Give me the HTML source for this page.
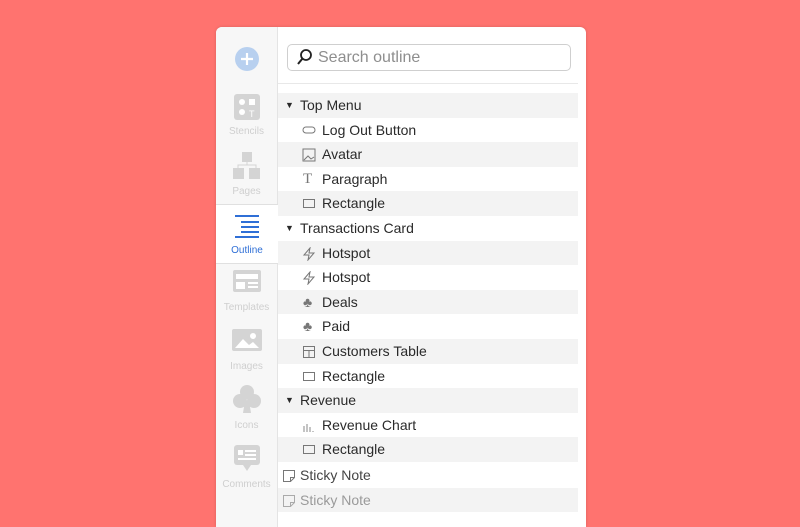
<!DOCTYPE html>
<html><head><style>
body{margin:0;width:800px;height:513px;background:#ff736f;overflow:hidden;font-family:"Liberation Sans",sans-serif;position:relative}
.panel{position:absolute;left:216px;top:27px;width:370px;height:500px;background:#fff;border-radius:6px 6px 0 0;overflow:hidden;box-shadow:0 0 3px rgba(0,0,0,.15)}
.side{position:absolute;left:0;top:0;width:61px;height:100%;background:#f7f7f7;border-right:1px solid #e4e4e4}
.si{position:absolute;left:0;width:61px;text-align:center;font-size:10px;color:#cfcfcf}
.si div{margin-top:3px}
.sel{background:#fff;border-top:1px solid #e0e0e0;border-bottom:1px solid #e0e0e0;width:62px;color:#2f6fd6}
.search{position:absolute;left:71px;top:17px;width:282px;height:25px;border:1px solid #cfcfcf;border-radius:5px;font-size:16px;color:#8e8e8e;line-height:25px;text-indent:30px}
.sep{position:absolute;left:62px;top:56px;width:300px;height:1px;background:#e8e8e8}
.row{position:absolute;left:62px;width:300px;height:24.6px;font-size:14px;color:#2a2a2a;line-height:24.6px}
.g{background:#f3f3f3}
.row svg{position:absolute;top:6px}
</style></head><body>
<div class="panel">
<div class="side">
 <div class="si" style="top:20px"><svg width="24" height="24"><circle cx="12" cy="12" r="12" fill="#b8d0ef"/><path d="M12 6v12M6 12h12" stroke="#fff" stroke-width="2.2"/></svg></div>
 <div class="si" style="top:67px"><svg width="26" height="26"><rect width="26" height="26" rx="3" fill="#d4d4d4"/><circle cx="8" cy="8" r="3" fill="#fff"/><rect x="15" y="5" width="6" height="6" fill="#fff"/><circle cx="8" cy="18" r="3" fill="#fff"/><text x="15" y="23" font-size="9" fill="#fff">T</text></svg><div>Stencils</div></div>
 <div class="si" style="top:125px"><svg width="28" height="28"><rect x="9" y="0" width="10" height="10" fill="#d4d4d4"/><rect x="0" y="16" width="11" height="11" fill="#d4d4d4"/><rect x="16" y="16" width="11" height="11" fill="#d4d4d4"/><path d="M14 10v3M5 16v-3h18v3" stroke="#d4d4d4" fill="none"/></svg><div>Pages</div></div>
 <div class="si sel" style="top:177px;height:58px"><svg width="26" height="26" style="margin-top:8px"><path d="M1 3h24M7 9h18M7 14h18M7 19h18M1 24h24" stroke="#2f6fd6" stroke-width="2"/></svg><div>Outline</div></div>
 <div class="si" style="top:243px"><svg width="28" height="24"><rect width="28" height="22" rx="2" fill="#d4d4d4"/><rect x="3" y="4" width="22" height="5" fill="#fff"/><rect x="3" y="12" width="9" height="7" fill="#fff"/><rect x="15" y="12" width="10" height="2" fill="#fff"/><rect x="15" y="16" width="10" height="2" fill="#fff"/></svg><div style="margin-top:5px">Templates</div></div>
 <div class="si" style="top:302px"><svg width="30" height="24"><rect width="30" height="22" rx="2" fill="#d4d4d4"/><path d="M3 19l8-9 6 6 4-3 6 6z" fill="#fff"/><circle cx="21" cy="7" r="3" fill="#fff"/></svg><div style="margin-top:5px">Images</div></div>
 <div class="si" style="top:357px"><svg width="30" height="30"><circle cx="15" cy="8" r="7" fill="#d4d4d4"/><circle cx="8" cy="17" r="7" fill="#d4d4d4"/><circle cx="22" cy="17" r="7" fill="#d4d4d4"/><path d="M13 17h4l2 12h-8z" fill="#d4d4d4"/></svg><div>Icons</div></div>
 <div class="si" style="top:418px"><svg width="26" height="28"><rect width="26" height="20" rx="3" fill="#d4d4d4"/><path d="M9 20l4 6 4-6z" fill="#d4d4d4"/><rect x="4" y="5" width="5" height="5" fill="#fff"/><rect x="11" y="5" width="11" height="2" fill="#fff"/><rect x="11" y="9" width="11" height="2" fill="#fff"/><rect x="4" y="13" width="18" height="2" fill="#fff"/></svg><div>Comments</div></div>
</div>
<div class="search"><svg width="16" height="18" style="position:absolute;left:8px;top:4px"><circle cx="10" cy="6" r="5" stroke="#222" stroke-width="1.8" fill="none"/><path d="M6.5 9.5L2 15" stroke="#222" stroke-width="2"/></svg>Search outline</div>
<div class="sep"></div>
<div class="row g" style="top:66px"><span style="position:absolute;left:7px;font-size:9px">▼</span><span style="position:absolute;left:22px">Top Menu</span></div>
<div class="row" style="top:90.6px"><svg width="14" height="12" style="left:24px"><rect x="1" y="3" width="12" height="6" rx="3" fill="none" stroke="#777"/></svg><span style="position:absolute;left:44px">Log Out Button</span></div>
<div class="row g" style="top:115.2px"><svg width="14" height="14" style="left:24px"><rect x="1" y="1" width="12" height="12" fill="none" stroke="#777"/><path d="M2 12l4-4 3 3 3-2" stroke="#777" fill="none"/></svg><span style="position:absolute;left:44px">Avatar</span></div>
<div class="row" style="top:139.8px"><span style="position:absolute;left:25px;color:#777;font-family:'Liberation Serif';font-size:15px">T</span><span style="position:absolute;left:44px">Paragraph</span></div>
<div class="row g" style="top:164.4px"><svg width="14" height="12" style="left:24px"><rect x="1.5" y="2.5" width="11" height="8" fill="none" stroke="#777"/></svg><span style="position:absolute;left:44px">Rectangle</span></div>
<div class="row" style="top:189px"><span style="position:absolute;left:7px;font-size:9px">▼</span><span style="position:absolute;left:22px">Transactions Card</span></div>
<div class="row g" style="top:213.6px"><svg width="14" height="14" style="left:24px"><path d="M8 1L2 8h5l-1 5 6-7H7z" fill="none" stroke="#777"/></svg><span style="position:absolute;left:44px">Hotspot</span></div>
<div class="row" style="top:238.2px"><svg width="14" height="14" style="left:24px"><path d="M8 1L2 8h5l-1 5 6-7H7z" fill="none" stroke="#777"/></svg><span style="position:absolute;left:44px">Hotspot</span></div>
<div class="row g" style="top:262.8px"><span style="position:absolute;left:25px;color:#777">♣</span><span style="position:absolute;left:44px">Deals</span></div>
<div class="row" style="top:287.4px"><span style="position:absolute;left:25px;color:#777">♣</span><span style="position:absolute;left:44px">Paid</span></div>
<div class="row g" style="top:312px"><svg width="14" height="14" style="left:24px"><rect x="1.5" y="1.5" width="11" height="11" fill="none" stroke="#777"/><path d="M1.5 5.5h11M7 5.5v7" stroke="#777"/></svg><span style="position:absolute;left:44px">Customers Table</span></div>
<div class="row" style="top:336.6px"><svg width="14" height="12" style="left:24px"><rect x="1.5" y="2.5" width="11" height="8" fill="none" stroke="#777"/></svg><span style="position:absolute;left:44px">Rectangle</span></div>
<div class="row g" style="top:361.2px"><span style="position:absolute;left:7px;font-size:9px">▼</span><span style="position:absolute;left:22px">Revenue</span></div>
<div class="row" style="top:385.8px"><svg width="14" height="14" style="left:24px"><path d="M2 13V7M5 13V5M8 13V8M11 13v-1" stroke="#888"/></svg><span style="position:absolute;left:44px">Revenue Chart</span></div>
<div class="row g" style="top:410.4px"><svg width="14" height="12" style="left:24px"><rect x="1.5" y="2.5" width="11" height="8" fill="none" stroke="#777"/></svg><span style="position:absolute;left:44px">Rectangle</span></div>
<div class="row" style="top:435.5px"><svg width="14" height="14" style="left:4px"><path d="M1.5 1.5h11v7l-4 4h-7z M12.5 8.5h-4v4" fill="none" stroke="#777"/></svg><span style="position:absolute;left:22px;color:#444">Sticky Note</span></div>
<div class="row g" style="top:460.5px"><svg width="14" height="14" style="left:4px"><path d="M1.5 1.5h11v7l-4 4h-7z M12.5 8.5h-4v4" fill="none" stroke="#aaa"/></svg><span style="position:absolute;left:22px;color:#9a9a9a">Sticky Note</span></div>
</div>
</body></html>
